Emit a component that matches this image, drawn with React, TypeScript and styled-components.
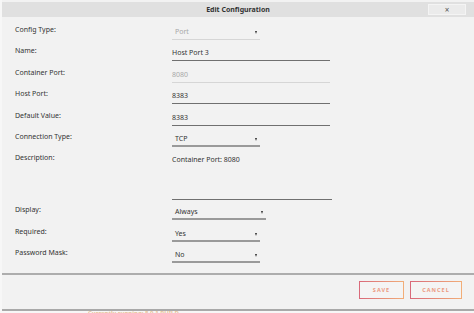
import styled, { createGlobalStyle } from "styled-components";

const GlobalStyle = createGlobalStyle`
  html, body {
    margin: 0;
    padding: 0;
    background: #f2f2f2;
  }
  body {
    font-family: "Noto Sans", "Open Sans", sans-serif;
  }
`;

type Field = {
  label: string;
  value: string;
  kind: "text" | "select";
  width: number;
  disabled?: boolean;
  tall?: boolean;
};

const fields: Field[] = [
  { label: "Config Type:", value: "Port", kind: "select", width: 88, disabled: true },
  { label: "Name:", value: "Host Port 3", kind: "text", width: 158 },
  { label: "Container Port:", value: "8080", kind: "text", width: 158, disabled: true },
  { label: "Host Port:", value: "8383", kind: "text", width: 158 },
  { label: "Default Value:", value: "8383", kind: "text", width: 158 },
  { label: "Connection Type:", value: "TCP", kind: "select", width: 88 },
  { label: "Description:", value: "Container Port: 8080", kind: "text", width: 160, tall: true },
  { label: "Display:", value: "Always", kind: "select", width: 94 },
  { label: "Required:", value: "Yes", kind: "select", width: 88 },
  { label: "Password Mask:", value: "No", kind: "select", width: 88 },
];

const App = () => {
  return (
    <>
      <GlobalStyle />
      <Page>
        <Modal>
          <Header>
            <Title>Edit Configuration</Title>
            <CloseButton>×</CloseButton>
          </Header>
          <Form>
            {fields.map((f) => (
              <Row key={f.label} $tall={f.tall}>
                <Label>{f.label}</Label>
                <Input $width={f.width} $tall={f.tall} $disabled={f.disabled} $select={f.kind === "select"}>
                  <Value $disabled={f.disabled}>{f.value}</Value>
                  {f.kind === "select" && <Caret />}
                </Input>
              </Row>
            ))}
          </Form>
          <Footer>
            <Button>SAVE</Button>
            <Button $wide>CANCEL</Button>
          </Footer>
        </Modal>
        <Behind>Currently running: 8.0.1 BUILD</Behind>
      </Page>
    </>
  );
};

const Page = styled.div`
  width: 474px;
  height: 313px;
  overflow: hidden;
  background: #f7f7f7;
`;

const Modal = styled.div`
  margin: 0 0 0 2px;
  padding-top: 2px;
  background: #f2f2f2;
  border-bottom: 2px solid #a9a9a9;
`;

const Header = styled.div`
  height: 15px;
  background: #e0e0e0;
  display: flex;
  align-items: center;
  justify-content: center;
  position: relative;
`;

const Title = styled.div`
  font-size: 7px;
  font-weight: 700;
  color: #333;
`;

const CloseButton = styled.div`
  position: absolute;
  right: 8px;
  top: 2px;
  width: 38px;
  height: 11px;
  background: #ebebeb;
  border: 1px solid #f4f4f4;
  box-sizing: border-box;
  display: flex;
  align-items: center;
  justify-content: center;
  font-size: 8px;
  color: #555;
`;

const Form = styled.div`
  padding: 8px 0 3px 13px;
  border-bottom: 2px solid #adadad;
`;

const Row = styled.div<{ $tall?: boolean }>`
  display: grid;
  grid-template-columns: 157px 1fr;
  height: ${(p) => (p.$tall ? "52px" : "21.4px")};
`;

const Label = styled.div`
  font-size: 7px;
  color: #333;
  line-height: 10px;
`;

const Input = styled.div<{ $width: number; $tall?: boolean; $disabled?: boolean; $select?: boolean }>`
  width: ${(p) => p.$width}px;
  height: ${(p) => (p.$tall ? "47px" : "15px")};
  box-sizing: border-box;
  padding: 2px 3px 0 ${(p) => (p.$select ? "3px" : "0")};
  display: flex;
  justify-content: space-between;
  align-items: flex-start;
  border-bottom: ${(p) =>
    p.$disabled ? "1.5px solid #d6d6d6" : p.$select ? "2px solid #9a9a9a" : "1.5px solid #707070"};
`;

const Value = styled.span<{ $disabled?: boolean }>`
  font-size: 7px;
  line-height: 10px;
  color: ${(p) => (p.$disabled ? "#a8a8a8" : "#333")};
`;

const Caret = styled.span`
  margin-top: 4px;
  width: 0;
  height: 0;
  border-left: 1.5px solid transparent;
  border-right: 1.5px solid transparent;
  border-top: 3px solid #333;
`;

const Footer = styled.div`
  height: 34px;
  box-sizing: border-box;
  display: flex;
  justify-content: flex-end;
  align-items: flex-start;
  gap: 6px;
  padding: 6px 12px 0 0;
`;

const Button = styled.div<{ $wide?: boolean }>`
  width: ${(p) => (p.$wide ? "52px" : "45px")};
  height: 18px;
  box-sizing: border-box;
  border: 1.5px solid;
  border-image: linear-gradient(90deg, #d9697a, #f2ae78) 1;
  display: flex;
  align-items: center;
  justify-content: center;
  font-size: 5.5px;
  font-weight: 700;
  letter-spacing: 1px;
  color: #ec9a82;
  background: #f4f4f4;
`;

const Behind = styled.div`
  margin-left: 88px;
  font-size: 6px;
  line-height: 6px;
  color: #e8c49a;
  font-weight: 700;
  margin-top: -1px;
`;

export default App;
